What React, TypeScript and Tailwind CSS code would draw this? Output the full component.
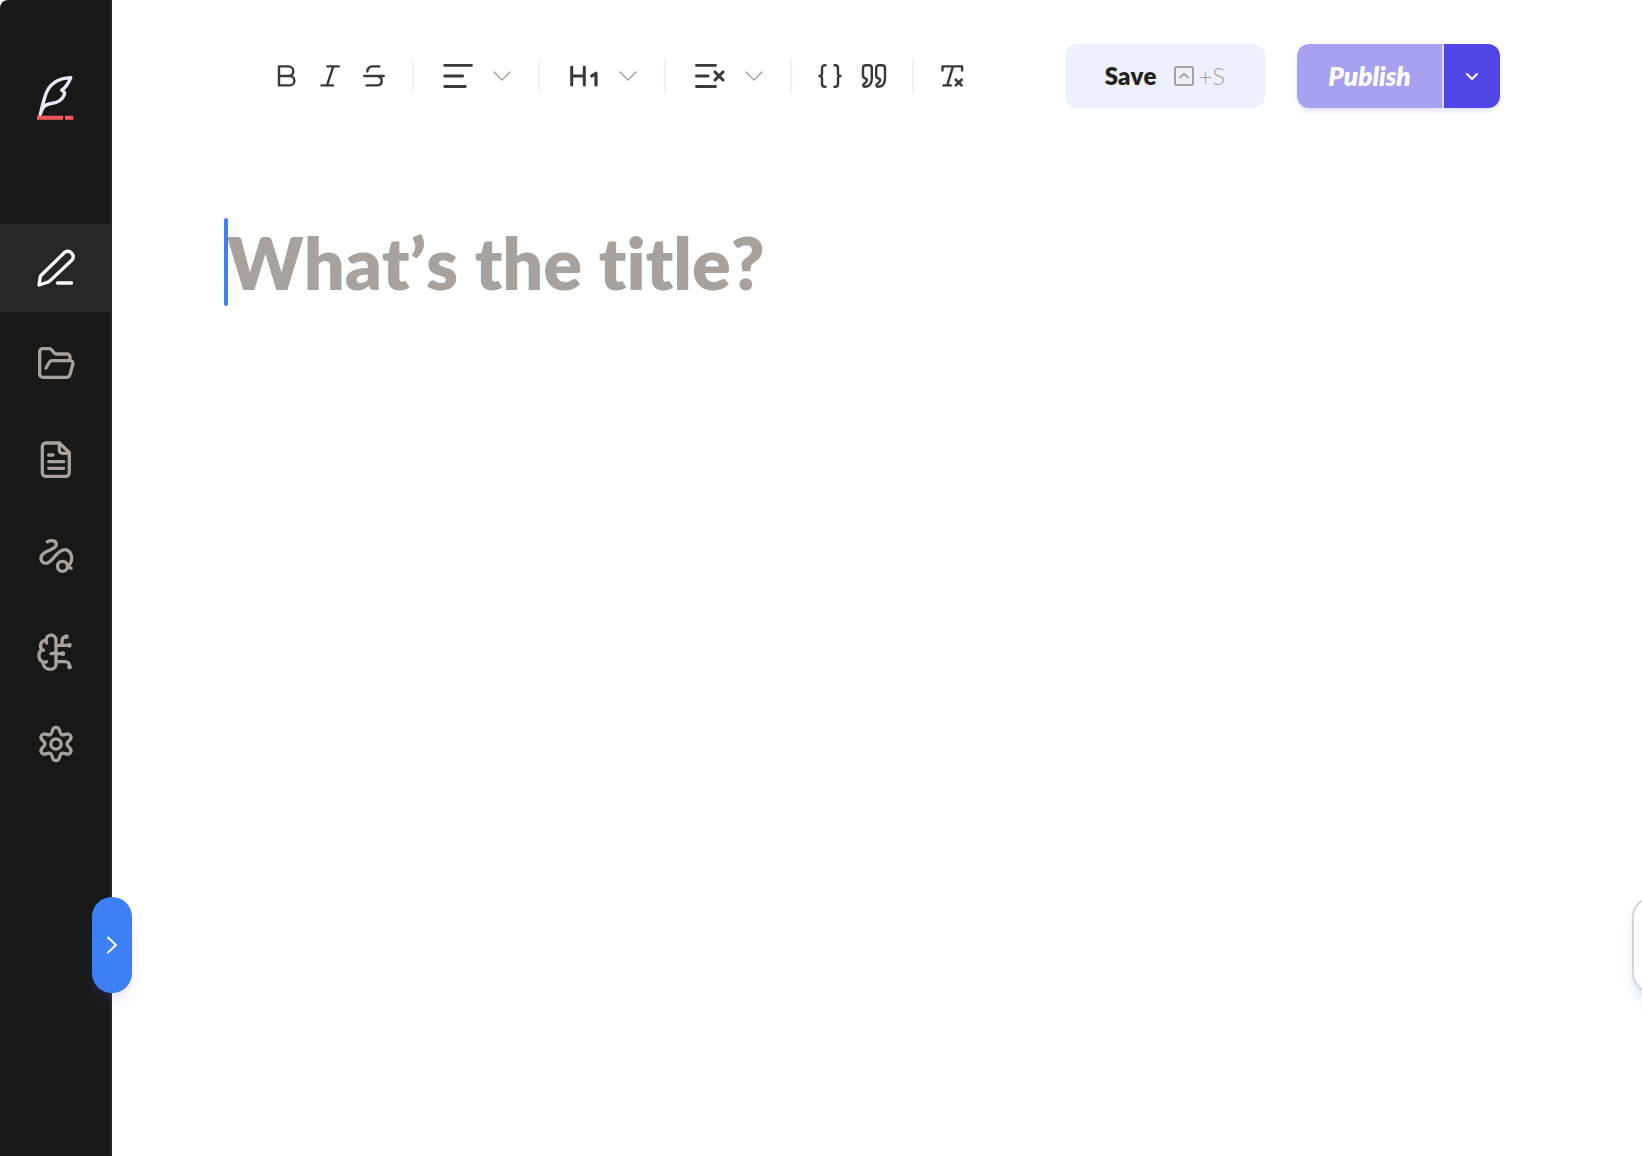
import { useState } from 'react';
import type { ReactNode } from 'react';
import clsx from 'clsx';

interface IconProps {
  children: ReactNode;
  className?: string;
}

function NavIcon({ children }: IconProps) {
  return (
    <svg viewBox="0 0 40 40" className="size-10" fill="none" stroke="currentColor" strokeWidth="3.3" strokeLinecap="round" strokeLinejoin="round">
      {children}
    </svg>
  );
}

function ToolIcon({ children, className }: IconProps) {
  return (
    <svg viewBox="0 0 32 32" className={clsx('size-8', className)} fill="none" stroke="currentColor" strokeWidth="2.4" strokeLinecap="round" strokeLinejoin="round">
      {children}
    </svg>
  );
}

function Logo() {
  return (
    <svg viewBox="0 0 40 48" className="h-12 w-10" fill="none">
      <path
        d="M34.8 4.600C22 5.200 13 11.500 9.500 22 7.500 28 5.800 34 4.300 41.500 5.500 35.500 8.500 31.800 13 31c7.500-.8 13.500-3.500 15.500-9.800.5-1.700-.6-2.900-2.800-4C30 14.500 32.500 10 34.800 4.600z"
        stroke="#e9e9f4"
        strokeWidth="3.400"
        strokeLinejoin="round"
      />
      <path d="M1 42.700h26v4H1zM29 42.700h8.300v4H29z" fill="#ff5757" />
    </svg>
  );
}

const navItems = [
  {
    name: 'Write',
    icon: (
      <NavIcon>
        <path d="M5.200 27.200 28.800 4.200a5.400 5.400 0 0 1 7.200 7.800L14.200 32.600 11.500 34.300 3 37l1.300-8.300z" />
        <path d="M21.500 35h14" />
      </NavIcon>
    ),
  },
  {
    name: 'Folders',
    icon: (
      <NavIcon>
        <path d="M34 16v-3a3 3 0 0 0-3-3H20.500c-1 0-1.800-.4-2.400-1.200L15.600 5.800a3 3 0 0 0-2.400-1.200H6.700a3 3 0 0 0-3 3v22.700a3 3 0 0 0 3 3h24a3.400 3.400 0 0 0 3.200-2.600l3-11a2.400 2.400 0 0 0-2.300-3H16a3 3 0 0 0-2.800 1.800L10 24" />
      </NavIcon>
    ),
  },
  {
    name: 'Documents',
    icon: (
      <NavIcon>
        <path d="M23.300 3H9.800a3.500 3.500 0 0 0-3.500 3.500v26.300a3.500 3.500 0 0 0 3.500 3.500h20a3.500 3.500 0 0 0 3.500-3.500V12.500z" />
        <path d="M23.300 3v7.300a3 3 0 0 0 3 3h7M12.700 15h4.300M12.700 21.700h15M12.700 28.300h15" />
      </NavIcon>
    ),
  },
  {
    name: 'Sketches',
    icon: (
      <NavIcon>
        <path d="M11.300 5.800C15.500 3.500 20.700 4.700 20.300 8.700 19.900 13.500 12 13.800 7.500 17.500c-4.600 4-2.500 9.800 2.500 9.800 6.500 0 10.500-13.600 19-13.600 5 0 7.500 6.300 6.600 10.300-.6 2.800-1.600 4.500-3.400 6.500" />
        <circle cx="26.500" cy="30.300" r="5" />
        <path d="M31.500 30.300c1 1 2 1.600 3.600 1.900" />
      </NavIcon>
    ),
  },
  {
    name: 'Assistant',
    icon: (
      <NavIcon>
        <path d="M20 32.500V8.500C20 1 10 1.500 10 8.200 4.600 8.700 3.200 14 5.800 17.500c-4.600 3.600-3.300 10.800 1 12.300.2 4.500 2.800 7.500 7.200 7.500 3.600 0 6-2 6-4.800z" />
        <path d="M10 8.200c-.2 1.200.2 2 .8 2.800M5.800 17.500l1.700.8M6.800 29.800c1.200.4 2.600.5 3.700 0M15 21.700c2.500 0 4-.7 5-2" />
        <path d="M20 13.300h13M26 13.300V9c0-2.500 1.500-4 4-4.300M20 21.700h6.500M20 29.700h9c3 0 4.500 1.800 4.500 5" />
        <path d="M33.300 13.300h.1M30.300 4.700h.1M26.700 21.700h.1M33.500 35h.1" strokeWidth="4.800" />
      </NavIcon>
    ),
  },
  {
    name: 'Settings',
    icon: (
      <NavIcon>
        <path d="M20 3.300C25 3.300 22.500 8.700 25.500 10.500 28.500 12.300 32.200 7.200 34.500 11.600 37.200 15.800 31 16.300 31 20S37.200 24.200 34.500 28.400C32.200 32.800 28.500 27.700 25.500 29.500 22.500 31.300 25 36.700 20 36.700S17.500 31.300 14.500 29.500C11.500 27.700 7.800 32.800 5.500 28.400 2.800 24.200 9 23.700 9 20S2.800 15.800 5.500 11.600C7.800 7.200 11.500 12.300 14.500 10.500 17.500 8.700 15 3.300 20 3.300z" />
        <circle cx="20" cy="20" r="5.200" />
      </NavIcon>
    ),
  },
];

function ToolButton({ label, children }: { label: string; children: ReactNode }) {
  return (
    <button type="button" aria-label={label} className="flex h-11 w-11 items-center justify-center">
      {children}
    </button>
  );
}

function ToolDropdown({ label, children }: { label: string; children: ReactNode }) {
  return (
    <button type="button" aria-label={label} aria-haspopup="menu" className="flex h-11 items-center gap-1 pl-2">
      <span className="flex w-10 justify-center">{children}</span>
      <span className="flex w-10 justify-center">
        <ToolIcon className="text-[#a8a29e]">
          <path d="m8 12 8 8 8-8" strokeWidth="1.500" />
        </ToolIcon>
      </span>
    </button>
  );
}

function Divider() {
  return <span className="mx-4 h-8 w-0.5 shrink-0 bg-[#edf1fd]" />;
}

function Toolbar() {
  return (
    <div role="toolbar" aria-label="Formatting" className="flex items-center text-[#3b3938]">
      <ToolButton label="Bold">
        <ToolIcon>
          <path d="M9 6.400h9.500a4.800 4.800 0 0 1 0 9.600H9zM9 16h10.700a4.700 4.700 0 0 1 0 9.400H9z" />
        </ToolIcon>
      </ToolButton>
      <ToolButton label="Italic">
        <ToolIcon>
          <path d="M13.500 6.400h11.200M7.500 25.400h11.500M19.300 6.400l-6.300 19" />
        </ToolIcon>
      </ToolButton>
      <ToolButton label="Strikethrough">
        <ToolIcon>
          <path d="M21.300 6.400h-7a5 5 0 0 0-5 5M6.300 16h19.400M19.500 16c5.800 1.200 5.500 9.400-.5 9.400H8.700" />
        </ToolIcon>
      </ToolButton>
      <Divider />
      <ToolDropdown label="Align">
        <ToolIcon>
          <path d="M2.700 5.400h26.800M2.700 16h18M2.700 26.500h20.600" strokeWidth="2.800" />
        </ToolIcon>
      </ToolDropdown>
      <Divider />
      <ToolDropdown label="Heading">
        <ToolIcon>
          <path d="M3.700 7v18M16.300 7v18M3.700 16h12.600" strokeWidth="3" />
          <path d="M28 13.300V25M28 13.300l-4.200 2.600" strokeWidth="3.200" />
        </ToolIcon>
      </ToolDropdown>
      <Divider />
      <ToolDropdown label="List">
        <ToolIcon>
          <path d="M2.500 5.400h19M2.500 16h11.600M2.500 26.500h19" strokeWidth="2.900" />
          <path d="m21 12 8 8M29 12l-8 8" strokeWidth="3.100" />
        </ToolIcon>
      </ToolDropdown>
      <Divider />
      <ToolButton label="Code">
        <ToolIcon>
          <path d="M11.500 5.200h-.8a2.700 2.700 0 0 0-2.700 2.700v5.600c0 1.400-1 2.500-2.500 2.500 1.500 0 2.500 1.100 2.500 2.500v5.600a2.700 2.700 0 0 0 2.700 2.700h.8M20.500 5.200h.8a2.700 2.700 0 0 1 2.700 2.700v5.600c0 1.400 1 2.500 2.500 2.500-1.500 0-2.500 1.100-2.500 2.500v5.600a2.700 2.700 0 0 1-2.700 2.700h-.8" />
        </ToolIcon>
      </ToolButton>
      <ToolButton label="Quote">
        <ToolIcon>
          <path d="M5 8a2.800 2.800 0 0 1 2.800-2.800h3.200A2.800 2.800 0 0 1 13.800 8v10.500c0 5-2.300 8-6.800 8.300-2 .1-2.400-2.400-.6-3.200 2.400-1 3.200-4.400 1.800-4.800C6 18.300 5 17.300 5 15.500z" />
          <path d="M18.200 8A2.800 2.800 0 0 1 21 5.200h3.200A2.800 2.800 0 0 1 27 8v10.500c0 5-2.300 8-6.800 8.300-2 .1-2.400-2.400-.6-3.200 2.400-1 3.200-4.400 1.800-4.800-2.200-.5-3.200-1.500-3.200-3.300z" />
        </ToolIcon>
      </ToolButton>
      <Divider />
      <ToolButton label="Clear formatting">
        <ToolIcon>
          <path d="M6.500 10.500V6.400h19.600v4.100M17 6.400l-5.800 19M7.500 25.400h7.300" />
          <path d="m19.800 19.800 5.800 5.600M25.600 19.800l-5.800 5.600" strokeWidth="2.700" />
        </ToolIcon>
      </ToolButton>
    </div>
  );
}

export default function App() {
  const [active, setActive] = useState('Write');
  const [title, setTitle] = useState('');

  return (
    <div className="relative flex min-h-screen overflow-hidden bg-white font-['Lato',sans-serif] [font-kerning:none] [font-variant-ligatures:none]">
      {/* Sidebar */}
      <aside className="flex w-28 shrink-0 flex-col rounded-tl-lg border-r-2 border-[#262626] bg-[#181818]">
        <a href="#" aria-label="Home" className="flex h-56 justify-center pt-[73px] pl-0.5">
          <Logo />
        </a>
        <nav className="flex flex-col gap-2">
          {navItems.map(item => (
            <button
              key={item.name}
              type="button"
              aria-label={item.name}
              onClick={() => setActive(item.name)}
              className={clsx(
                'flex h-22 items-center justify-center pl-0.5 last:h-20',
                item.name === active ? 'bg-[#262626] text-white' : 'text-[#a8a29e]'
              )}
            >
              {item.icon}
            </button>
          ))}
        </nav>
      </aside>

      <main className="min-w-0 flex-1">
        <header className="flex items-center justify-between pt-11 pr-[142px] pl-[152px]">
          <Toolbar />
          <div className="flex items-center gap-8 text-2xl">
            <button type="button" className="flex h-16 w-[200px] items-center justify-center rounded-xl bg-[#edf1fd] font-extrabold text-[#222]">
              Save
              <span className="ml-4 flex items-center gap-0.5 font-light text-[#a8a29e]">
                <svg viewBox="0 0 24 24" className="size-6" fill="none" stroke="currentColor" strokeWidth="2" strokeLinejoin="round">
                  <rect x="3" y="3" width="18" height="18" rx="1" />
                  <path d="m7.500 14 4.500-4.300 4.500 4.300" />
                </svg>
                +S
              </span>
            </button>
            <div className="flex h-16 rounded-xl shadow-md shadow-indigo-500/15">
              <button type="button" className="w-[145px] rounded-l-xl bg-[#a7a1f1] text-[26px] font-extrabold text-white italic">
                Publish
              </button>
              <button type="button" aria-label="Publish options" className="flex w-[58px] items-center justify-center rounded-r-xl border-l-2 border-[#dcdaf5] bg-[#4f46e5] text-white">
                <svg viewBox="0 0 24 24" className="size-6" fill="none" stroke="currentColor" strokeWidth="2" strokeLinecap="round" strokeLinejoin="round">
                  <path d="m7 10 5 5 5-5" />
                </svg>
              </button>
            </div>
          </div>
        </header>

        {/* Editor */}
        <div className="relative mt-[110px] mr-[142px] ml-28">
          <input
            type="text"
            aria-label="Title"
            placeholder="What’s the title?"
            value={title}
            onChange={e => setTitle(e.target.value)}
            className="block h-22 w-full pl-[3px] text-7xl font-extrabold text-stone-800 outline-none placeholder:text-[#a8a29e]"
          />
          {title === '' && <span className="absolute top-0 left-0 h-22 w-1 rounded-xs bg-[#3d80f6]" />}
        </div>
      </main>

      {/* Panel handles */}
      <button
        type="button"
        aria-label="Open left panel"
        className="absolute bottom-[163px] left-[92px] flex h-24 w-10 items-center justify-center rounded-full bg-[#3d80f6] text-white shadow-lg shadow-indigo-500/15"
      >
        <svg viewBox="0 0 24 24" className="size-6" fill="none" stroke="currentColor" strokeWidth="2" strokeLinecap="round" strokeLinejoin="round">
          <path d="m8 4.500 8 7.500-8 7.500" />
        </svg>
      </button>
      <button
        type="button"
        aria-label="Open right panel"
        className="absolute -right-[30px] bottom-[163px] h-24 w-10 rounded-full border-2 border-[#d6d5de] bg-white shadow-lg shadow-indigo-500/20"
      />
    </div>
  );
}
